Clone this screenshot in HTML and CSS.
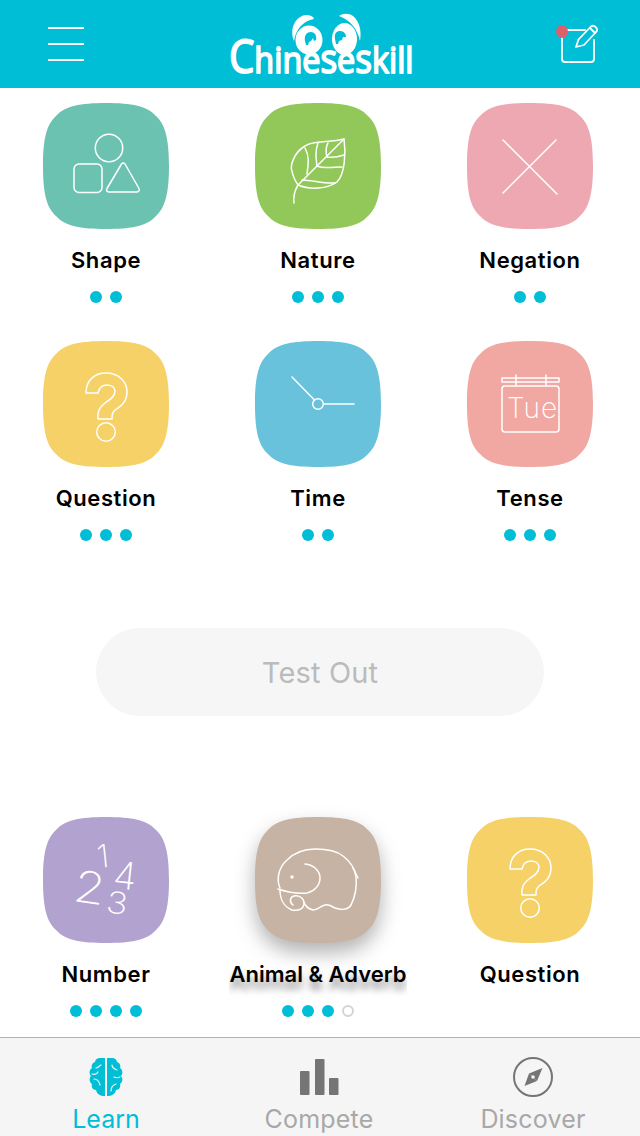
FILE: index.html
```html
<!DOCTYPE html>
<html lang="en">
<head>
<meta charset="utf-8">
<title>ChineseSkill</title>
<link rel="stylesheet" href="styles.css">
</head>
<body>
<svg class="defs" width="0" height="0" aria-hidden="true">
  <symbol id="sq" viewBox="0 0 126 126"><path d="M63 0C89 0 104 3 113 13C123 22 126 38 126 63C126 88 123 104 113 113C104 123 89 126 63 126C37 126 22 123 13 113C3 104 0 89 0 63C0 37 3 22 13 13C22 3 37 0 63 0Z"/></symbol>
</svg>
<div class="app">
  <header class="topbar">
    <div class="menu"><span></span><span></span><span></span></div>
    <svg class="logo" viewBox="0 -10 190 88" width="190" height="88">
      <g fill="#fff">
        <path d="M68 31C63 18 70 6 80 5C84 5 87 6 88 9C77 11 70 19 68 31Z"/>
        <path d="M113 6C117 3 123 3 127 6C133 11 136 20 134 31C131 18 124 10 113 6Z"/>
        <ellipse cx="83" cy="30" rx="13.500" ry="14.500"/>
        <ellipse cx="118.500" cy="29" rx="12.500" ry="16"/>
      </g>
      <g fill="#00bed6">
        <path d="M79 31C78 25 81 22 85 22C89 22 91 26 90 30L88 31L87 28L85 31L83 32L82 35L80 35Z"/>
        <path d="M109 29C108 23 111 21 114 21C118 21 120 24 120 27L117 27L116 30L113 31L112 34L110 34Z"/>
      </g>
      <text class="logo-text" transform="translate(3 63) scale(.875 1)"><tspan class="logo-cap">C</tspan>hine<tspan class="logo-big">s</tspan>e<tspan class="logo-big">s</tspan>kill</text>
    </svg>
    <div class="note">
      <svg viewBox="0 0 44 44" width="44" height="44" fill="none" stroke="#fff" stroke-width="1.800" stroke-linecap="round" stroke-linejoin="round">
        <path d="M27 6H7Q4 6 4 9V35Q4 38 7 38H33Q36 38 36 35V16"/>
        <path d="M18 23L20.500 15.500L33 2.500Q35 1 37 2.500L38.500 4Q40 6 38 8L26 21Z"/>
        <path d="M32 4L37 9"/>
      </svg>
      <span class="note-dot"></span>
    </div>
  </header>

  <main class="content">
    <section class="grid">
      <div class="cell">
        <div class="icon teal">
          <svg class="bg"><use href="#sq"/></svg>
          <svg class="art" viewBox="0 0 126 126"><circle cx="66" cy="45" r="13.700"/><rect x="31" y="61" width="28" height="28.500" rx="5"/><path d="M78.500 61Q80 59 82 61L96 85.500Q97 88.500 94 89H66Q62.500 88.500 64 85.500Z"/></svg>
        </div>
        <div class="label">Shape</div>
        <div class="dots"><i></i><i></i></div>
      </div>
      <div class="cell">
        <div class="icon green">
          <svg class="bg"><use href="#sq"/></svg>
          <svg class="art" viewBox="0 0 126 126"><path d="M89 36C75 40 58 37 50 43C38 50 35 64 37 68C38 74 41 79 43 82C55 87 72 86 82 79C90 71 91 50 89 36Z"/><path d="M89 36L43 82C40 87 38 92 39 100"/><path d="M63 40C60 48 61 55 62 63M73 40C70 45 71 50 72 54M50 45C55 54 53 62 52 71M62 63C70 66 78 64 87 64M72 54C78 55 83 54 89 52M47 77C58 77 68 81 80 80"/></svg>
        </div>
        <div class="label">Nature</div>
        <div class="dots"><i></i><i></i><i></i></div>
      </div>
      <div class="cell">
        <div class="icon pink">
          <svg class="bg"><use href="#sq"/></svg>
          <svg class="art" viewBox="0 0 126 126"><path d="M36 37L90 91M89 37L36 90"/></svg>
        </div>
        <div class="label">Negation</div>
        <div class="dots"><i></i><i></i></div>
      </div>
      <div class="cell">
        <div class="icon yellow">
          <svg class="bg"><use href="#sq"/></svg>
          <svg class="art" viewBox="0 0 126 126"><path d="M43 52C43 39 52 32 63 32C76 32 84 41 84 51C84 61 78 65 72 69C69 72 69 74 69 78H55C54 70 57 66 62 62C68 58 72 55 72 50C72 46 68 44 64 44C59 44 56 47 55 52Z"/><circle cx="63" cy="91" r="9.300"/></svg>
        </div>
        <div class="label">Question</div>
        <div class="dots"><i></i><i></i><i></i></div>
      </div>
      <div class="cell">
        <div class="icon blue">
          <svg class="bg"><use href="#sq"/></svg>
          <svg class="art" viewBox="0 0 126 126"><circle cx="63" cy="63" r="5.300"/><path d="M37 36L59.500 59M68.500 63H99"/></svg>
        </div>
        <div class="label">Time</div>
        <div class="dots"><i></i><i></i></div>
      </div>
      <div class="cell">
        <div class="icon salmon">
          <svg class="bg"><use href="#sq"/></svg>
          <svg class="art" viewBox="0 0 126 126"><rect x="35" y="37" width="57" height="4"/><path d="M49 34V44.500M79 34V44.500"/><rect x="35" y="45" width="57" height="46" rx="3"/><text class="art-text tue" x="40" y="77">Tue</text></svg>
        </div>
        <div class="label">Tense</div>
        <div class="dots"><i></i><i></i><i></i></div>
      </div>
    </section>

    <div class="test-wrap"><button class="test-out">Test Out</button></div>

    <section class="grid grid-last">
      <div class="cell">
        <div class="icon purple">
          <svg class="bg"><use href="#sq"/></svg>
          <svg class="art" viewBox="0 0 126 126">
            <text class="art-text d1" transform="translate(55 51) rotate(-6)">1</text>
            <text class="art-text d2" transform="translate(29 84) rotate(8) scale(1.150 1)">2</text>
            <text class="art-text d4" transform="translate(69 71) rotate(6)">4</text>
            <text class="art-text d3" transform="translate(62 95) rotate(8) scale(1.200 1)">3</text>
          </svg>
        </div>
        <div class="label">Number</div>
        <div class="dots"><i></i><i></i><i></i><i></i></div>
      </div>
      <div class="cell">
        <div class="icon tan lifted">
          <svg class="bg"><use href="#sq"/></svg>
          <svg class="art" viewBox="0 0 126 126"><path d="M25 71C22 64 22 52 32 43C40 35 50 32 60 32C72 32 82 34 88 39C96 45 100 51 101 60C102 70 100 80 96 88C93 93 86 93 80 91C76 89 74 87 70 88C66 89 62 93 58 93C54 92 50 89 49 85"/><path d="M50 47C59 48 65 54 65 61C65 68 60 74 52 76C42 77 32 75 23 72"/><path d="M25 73C25 82 29 90 37 93C44 94 49 92 49 86C49 81 44 78 39 79C35 80 34 85 38 88"/><path d="M98 51L103 61"/><circle class="eye" cx="37" cy="60" r="1.700"/></svg>
        </div>
        <div class="label shadowed">Animal &amp; Adverb</div>
        <div class="dots"><i></i><i></i><i></i><i class="empty"></i></div>
      </div>
      <div class="cell">
        <div class="icon yellow">
          <svg class="bg"><use href="#sq"/></svg>
          <svg class="art" viewBox="0 0 126 126"><path d="M43 52C43 39 52 32 63 32C76 32 84 41 84 51C84 61 78 65 72 69C69 72 69 74 69 78H55C54 70 57 66 62 62C68 58 72 55 72 50C72 46 68 44 64 44C59 44 56 47 55 52Z"/><circle cx="63" cy="91" r="9.300"/></svg>
        </div>
        <div class="label">Question</div>
      </div>
    </section>
  </main>

  <nav class="tabbar">
    <div class="tab active">
      <svg viewBox="0 0 34 40" width="34" height="40"><g fill="#00bed6"><path d="M16 1H11C8 1 6 3 6 5C3 6 2 9 3 11C0 13 0 17 2 19C0 21 0 25 3 27C2 30 4 33 7 33C8 37 11 39 16 39Z"/><path d="M18 1H23C26 1 28 3 28 5C31 6 32 9 31 11C34 13 34 17 32 19C34 21 34 25 31 27C32 30 30 33 27 33C26 37 23 39 18 39Z"/></g><g fill="none" stroke="#f5f5f5" stroke-width="1.200" stroke-linecap="round"><path d="M12 8C10 9 9 11 7 11M3 17C6 18 8 17 9 15M5 22C8 22 10 24 11 28"/><path d="M23 8C23 11 25 12 28 13M31 20C29 21 27 21 25 20M22 34C22 31 24 28 27 27"/></g></svg>
      <span>Learn</span>
    </div>
    <div class="tab">
      <svg viewBox="0 0 39 40" width="39" height="40"><g fill="#757575"><rect x="0" y="14" width="9.500" height="24" rx="1"/><rect x="15" y="2" width="9.500" height="36" rx="1"/><rect x="29" y="21" width="9.500" height="17" rx="1"/></g></svg>
      <span>Compete</span>
    </div>
    <div class="tab">
      <svg viewBox="0 0 42 40" width="42" height="40"><circle cx="21" cy="20" r="19" fill="none" stroke="#757575" stroke-width="2"/><path d="M30.500 11L25 24L17 16.500Z" fill="#757575"/><path d="M12.500 29L17 16.500L25 24Z" fill="#757575"/><circle cx="21" cy="20" r="1.800" fill="#f5f5f5"/></svg>
      <span>Discover</span>
    </div>
  </nav>
</div>
</body>
</html>
```
FILE: styles.css
```css
* { box-sizing: border-box; }
html, body { margin: 0; padding: 0; background: #fff; }
.defs { position: absolute; }
.app { width: 640px; height: 1136px; display: flex; flex-direction: column; overflow: hidden; font-family: Inter, "Noto Sans", sans-serif; }

.topbar { height: 88px; flex: none; background: #00bed6; display: flex; align-items: center; justify-content: space-between; padding: 0 38px 0 48px; }
.menu { width: 36px; height: 34px; display: flex; flex-direction: column; justify-content: space-between; margin-top: -1px; }
.menu span { display: block; height: 2px; background: #fff; }
.logo { display: block; }
.logo-text { font-family: "Open Sans", sans-serif; font-size: 37px; fill: #fff; stroke: #fff; stroke-width: 1.800px; stroke-linejoin: round; }
.logo-cap { font-size: 46px; }
.logo-big { font-size: 40px; }
.note { position: relative; width: 44px; height: 44px; margin-top: 4px; }
.note svg { display: block; }
.note-dot { position: absolute; left: -2px; top: 1px; width: 12px; height: 13px; border-radius: 50%; background: #dc5f6c; }

.content { flex: 1; display: flex; flex-direction: column; padding-top: 15px; }
.grid { display: grid; grid-template-columns: repeat(3, 212px); grid-auto-rows: 238px; }
.grid-last { grid-auto-rows: 220px; }
.cell { display: flex; flex-direction: column; align-items: center; }
.icon { position: relative; width: 126px; height: 126px; }
.icon svg { position: absolute; left: 0; top: 0; width: 126px; height: 126px; display: block; }
.art { fill: none; stroke: #fff; stroke-width: 1.500; stroke-linecap: round; stroke-linejoin: round; }
.art .eye { fill: #fff; stroke: none; }
.art-text { font-family: Inter, "Noto Sans", sans-serif; font-weight: 200; fill: #fff; stroke: none; }
.tue { font-size: 28px; letter-spacing: 1px; }
.d1 { font-size: 32px; }
.d2 { font-size: 44px; }
.d3 { font-size: 30px; }
.d4 { font-size: 38px; }
.teal { fill: #6cc2b0; }
.green { fill: #92c85a; }
.pink { fill: #eda8b2; }
.yellow { fill: #f5d168; }
.blue { fill: #68c2dc; }
.salmon { fill: #f2a8a2; }
.purple { fill: #b2a2cf; }
.tan { fill: #c7b3a3; }
.lifted .bg { filter: drop-shadow(0 10px 10px rgba(0, 0, 0, .3)); }

.label { margin-top: 17px; height: 28px; font-size: 22px; line-height: 28px; font-weight: 600; letter-spacing: .6px; color: #000; white-space: nowrap; }
.shadowed { width: 178px; height: 37px; margin-bottom: -9px; overflow: hidden; text-align: center; letter-spacing: 0; text-shadow: 0 8px 7px rgba(0, 0, 0, .4); }
.dots { margin-top: 17px; display: flex; gap: 8px; }
.dots i { display: block; width: 12px; height: 12px; border-radius: 50%; background: #00bed6; }
.dots i.empty { background: transparent; border: 2px solid #d4d4d4; }

.test-wrap { margin-top: 49px; height: 189px; display: flex; justify-content: center; }
.test-out { width: 448px; height: 88px; border: 0; border-radius: 44px; background: #f6f6f6; color: #bbb; font: 400 29px/1 Inter, "Noto Sans", sans-serif; letter-spacing: .15px; padding: 0; }

.tabbar { height: 99px; flex: none; display: grid; grid-template-columns: 212px 214px 214px; background: #f5f5f5; border-top: 1px solid #b2b2b2; padding-top: 19px; }
.tab { display: flex; flex-direction: column; align-items: center; color: #a8a8a8; font-size: 25px; line-height: 30px; letter-spacing: .2px; }
.tab svg { display: block; flex: none; }
.tab span { margin-top: 7px; }
.tab.active { color: #00bed6; letter-spacing: 0; }
```
